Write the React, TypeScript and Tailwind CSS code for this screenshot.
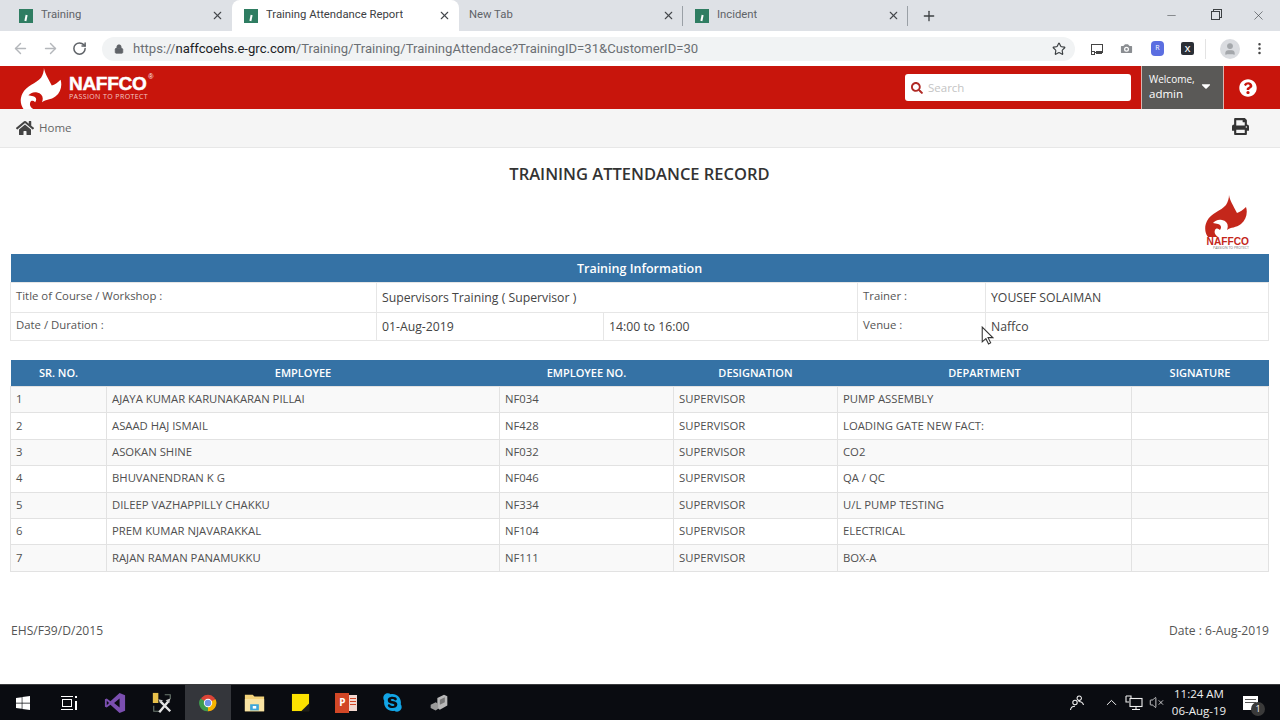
import React from "react";
import { ArrowLeft, ArrowRight, RotateCw, Lock, Star, X, Plus, Minus, Camera, MoreVertical, User, ChevronUp, VolumeX } from "lucide-react";
import { FaHome, FaPrint, FaQuestionCircle, FaSearch, FaWindows, FaSkype, FaCaretDown } from "react-icons/fa";

const Favicon = () => (
  <span className="flex h-[14px] w-[14px] shrink-0 items-end justify-center bg-[#2f7d62] pb-[2px]">
    <span className="h-[6px] w-[2px] rotate-12 bg-white" />
  </span>
);

const Tab = ({ title, active, icon = true, sep, w }: { title: string; active?: boolean; icon?: boolean; sep?: boolean; w: string }) => (
  <div className={`relative flex h-full items-center ${w} ${active ? "rounded-t-lg bg-white pl-3" : "pl-3"}`}>
    {icon && <Favicon />}
    <span className={`truncate font-['Roboto',sans-serif] text-[11.300px] ${icon ? "ml-2" : "-ml-[2px]"} ${active ? "text-[#3c4043]" : "text-[#5f6368]"}`}>{title}</span>
    <X size={13} strokeWidth={2} className="ml-auto mr-[8px] shrink-0 text-[#45484c]" />
    {sep && <span className="absolute right-0 top-[6px] h-[20px] w-px bg-[#9aa0a6]" />}
  </div>
);

const FlameLogo = ({ className, fill }: { className: string; fill: string }) => (
  <svg viewBox="0 0 44 42" className={className} fill={fill}>
    <path d="M24 0C25 6 28 10 32 18C35 17 38 15 41 12C43 18 41 25 36 29C31 33 26 32 22 35C24 30 22 26 17 25C13 24 10 26 8 28L13 29C16 30 17 32 15 35C13 33 11 33 10 35C9 38 10 40 13 42L3 42C0 38 -1 32 2 26C6 18 16 16 21 10C23 7 24 3 24 0Z" />
  </svg>
);

const ChromeIcon = () => (
  <svg viewBox="0 0 24 24" className="h-[18px] w-[18px]">
    <circle cx="12" cy="12" r="11" fill="#db4437" />
    <path d="M12 12 22 7a11 11 0 0 1-10 16z" fill="#f4b400" />
    <path d="M12 12 12 23A11 11 0 0 1 2 6z" fill="#3f9b4f" />
    <circle cx="12" cy="12" r="5.6" fill="#fff" />
    <circle cx="12" cy="12" r="4.3" fill="#6f94e8" />
  </svg>
);

const VsIcon = () => (
  <svg viewBox="0 0 24 24" className="h-[22px] w-[22px]" fill="#7b4fb0">
    <path d="M17 1l6 2.500v17L17 23 7 14l-4 3-2-1V8l2-1 4 3zM3 9.500v5l2.500-2.500zM17 7l-6 5 6 5z" />
  </svg>
);

const ToolsIcon = () => (
  <svg viewBox="0 0 24 24" className="h-[22px] w-[22px]">
    <rect x="2" y="1" width="6" height="11" fill="#e8c04a" />
    <path d="M15 3h6v5M3 15v6h6" fill="none" stroke="#6c7a70" strokeWidth="1.2" />
    <path d="M9 22 19 10M21 21 10 10" stroke="#e4e4e4" strokeWidth="2.600" />
    <path d="M8 8l5 1-3 3zM16 9l5-2-1 5z" fill="#c9c9c9" />
  </svg>
);

const FolderIcon = () => (
  <svg viewBox="0 0 24 24" className="h-[21px] w-[21px]">
    <path d="M1 3h9l2 2h11v17H1z" fill="#f2d27a" />
    <rect x="1" y="8" width="22" height="14" fill="#f8e3a3" />
    <rect x="7" y="14" width="10" height="7" fill="#3ea6d8" />
    <rect x="10" y="16" width="4" height="3" fill="#fff" />
  </svg>
);

const StickyIcon = () => (
  <svg viewBox="0 0 20 20" className="h-[19px] w-[19px]">
    <rect width="18" height="18" x="1" y="1" fill="#fce100" />
    <path d="M19 11v8h-8z" fill="#1c1c1c" />
  </svg>
);

const PptIcon = () => (
  <span className="relative flex h-[20px] w-[22px] items-center">
    <span className="absolute right-0 top-[2px] flex h-[16px] w-[13px] flex-col items-end gap-[2px] bg-[#f3d8d0] pr-[1px] pt-[3px]">
      <span className="h-px w-[6px] bg-[#d24726]" />
      <span className="h-px w-[6px] bg-[#d24726]" />
      <span className="h-px w-[6px] bg-[#d24726]" />
    </span>
    <span className="relative flex h-[20px] w-[14px] items-center justify-center bg-[#d24726] text-[10px] font-bold text-white">P</span>
  </span>
);

const DriveIcon = () => (
  <svg viewBox="0 0 24 24" className="h-[20px] w-[20px]">
    <path d="M10 6l8-4 4 2v11l-9 5-3-2z" fill="#b8b8b8" />
    <path d="M13 8l6-3v6l-6 3z" fill="#777" />
    <path d="M2 14l6-3 3 2v6l-3 2-6-3z" fill="#9a9a9a" />
  </svg>
);

const PeopleIcon = () => (
  <svg viewBox="0 0 16 16" className="h-[16px] w-[16px]" fill="none" stroke="#f0f0f0" strokeWidth="1.100">
    <circle cx="6" cy="7.500" r="2.200" />
    <path d="M1.500 15c.3-2.500 2-3.800 4.500-3.800M9 5a2.200 2.200 0 1 0 1-4 2.200 2.200 0 0 0-1 4zM9.500 6.500c2.500 0 4.500 1.300 5 3.500" />
  </svg>
);

const NetworkIcon = () => (
  <svg viewBox="0 0 18 16" className="h-[16px] w-[18px]" fill="none" stroke="#f0f0f0" strokeWidth="1.100">
    <path d="M1 1h5v3M1 1v6h3" />
    <rect x="5" y="3.500" width="12" height="8" />
    <path d="M11 11.500v3M7 14.500h8" />
  </svg>
);

const TaskCell = ({ children, active }: { children: React.ReactNode; active?: boolean }) => (
  <div className={`flex h-full w-[46.200px] items-center justify-center ${active ? "bg-[#34363b]" : ""}`}>{children}</div>
);

const rows = [
  ["1", "AJAYA KUMAR KARUNAKARAN PILLAI", "NF034", "SUPERVISOR", "PUMP ASSEMBLY"],
  ["2", "ASAAD HAJ ISMAIL", "NF428", "SUPERVISOR", "LOADING GATE NEW FACT:"],
  ["3", "ASOKAN SHINE", "NF032", "SUPERVISOR", "CO2"],
  ["4", "BHUVANENDRAN K G", "NF046", "SUPERVISOR", "QA / QC"],
  ["5", "DILEEP VAZHAPPILLY CHAKKU", "NF334", "SUPERVISOR", "U/L PUMP TESTING"],
  ["6", "PREM KUMAR NJAVARAKKAL", "NF104", "SUPERVISOR", "ELECTRICAL"],
  ["7", "RAJAN RAMAN PANAMUKKU", "NF111", "SUPERVISOR", "BOX-A"],
];

const headers = ["SR. NO.", "EMPLOYEE", "EMPLOYEE NO.", "DESIGNATION", "DEPARTMENT", "SIGNATURE"];
const colWidths = ["w-[96px]", "w-[393px]", "w-[174px]", "w-[164px]", "w-[294px]", "w-[137px]"];

const labelCell = "border border-[#e6e6e6] px-[5px] pb-[2px] align-middle text-[11.350px] text-[#555]";
const valueCell = "border border-[#e6e6e6] px-[5px] pt-[3px] align-middle text-[12.250px] text-[#444]";

export default function App() {
  return (
    <div className="flex h-screen w-full flex-col overflow-hidden bg-white font-['Open_Sans',sans-serif]">
      {/* browser tabs */}
      <div className="flex h-[31px] shrink-0 items-center bg-[#dee1e6] pl-[7px]">
        <Tab title="Training" w="w-[225px]" />
        <Tab title="Training Attendance Report" active w="w-[227px]" />
        <Tab title="New Tab" icon={false} sep w="w-[224px]" />
        <Tab title="Incident" sep w="w-[225px]" />
        <Plus size={16} strokeWidth={2} className="ml-[13px] text-[#3c4043]" />
        <div className="ml-auto flex items-center gap-[31px] pr-[14px] text-[#3c4043]">
          <Minus size={13} strokeWidth={1} className="mr-[2px]" />
          <span className="relative h-[9px] w-[9px] border border-[#3c4043] bg-[#dee1e6] shadow-[2px_-2px_0_-1px_#dee1e6,2px_-2px_0_0_#3c4043]" />
          <X size={15} strokeWidth={1} />
        </div>
      </div>

      {/* browser toolbar */}
      <div className="flex h-[35px] shrink-0 items-center bg-white">
        <div className="flex w-[102px] items-center gap-[13px] pl-[12px]">
          <ArrowLeft size={17} className="text-[#b4b7bb]" />
          <ArrowRight size={17} className="text-[#b4b7bb]" />
          <RotateCw size={15} strokeWidth={2.400} className="text-[#5f6368]" />
        </div>
        <div className="flex h-[24px] w-[973px] items-center rounded-full bg-[#f1f3f4] pl-[12px] pr-[9px]">
          <Lock size={10} fill="#5f6368" className="mr-[9px] text-[#5f6368]" />
          <span className="font-['Roboto',sans-serif] text-[13.100px] text-[#6b6f73]">
            https://<span className="text-[#202124]">naffcoehs.e-grc.com</span>/Training/Training/TrainingAttendace?TrainingID=31&amp;CustomerID=30
          </span>
          <Star size={14} className="ml-auto text-[#3c4043]" />
        </div>
        <div className="flex flex-1 items-center pl-[16px] text-[#5f6368]">
          <span className="relative h-[9px] w-[12px] border border-[#444]">
            <span className="absolute -bottom-[3px] -left-[1px] h-[4px] w-[4px] border border-[#444] bg-white" />
            <span className="absolute -bottom-[2px] right-0 h-[3px] w-[6px] bg-[#444]" />
          </span>
          <Camera size={15} fill="#8a8d91" className="ml-[16px] text-white" />
          <span className="ml-[17px] flex h-[15px] w-[13px] items-center justify-center rounded-[4px] bg-[#5b6ee1] text-[7px] text-white">R</span>
          <span className="ml-[17px] flex h-[13px] w-[13px] items-center justify-center rounded-[2px] bg-[#2b2f36] text-[9px] font-semibold text-white">X</span>
          <span className="ml-[11px] h-[20px] w-px bg-[#e3e3e3]" />
          <span className="ml-[14px] flex h-[20px] w-[20px] items-center justify-center rounded-full bg-[#dadce0]">
            <User size={14} fill="#a4a7ab" className="text-[#a4a7ab]" />
          </span>
          <MoreVertical size={15} className="ml-[12px] text-[#444]" />
        </div>
      </div>

      {/* app header */}
      <header className="flex h-[43px] shrink-0 items-center bg-[#c8150c] pl-[20px]">
        <FlameLogo className="mt-[2px] h-[41px] w-[44px]" fill="#fff" />
        <div className="ml-[5px] flex flex-col leading-none text-white">
          <span className="relative font-['Liberation_Sans',sans-serif] text-[19px] font-bold leading-[17px] tracking-[-0.300px] [-webkit-text-stroke:0.5px_white]">
            NAFFCO
            <sup className="absolute -right-[5px] top-[2px] text-[7px] font-normal [-webkit-text-stroke:0]">®</sup>
          </span>
          <span className="mt-[1px] text-[7px] tracking-[0.400px] text-[#f2c9c6]">PASSION TO PROTECT</span>
        </div>
        <div className="ml-auto flex h-full items-center">
          <div className="flex h-[27px] w-[226px] items-center rounded-[3px] bg-white pl-[6px]">
            <FaSearch size={12} className="text-[#b02a25]" />
            <span className="ml-[5px] text-[11.500px] text-[#c4c4c4]">Search</span>
          </div>
          <div className="ml-[10px] flex h-full w-[83px] items-center border-x border-[#d9b5b0] bg-[#5a5957] pb-[3px] pl-[7px] text-white">
            <div className="flex flex-col">
              <span className="text-[10px] leading-[15px]">Welcome,</span>
              <span className="text-[11.500px] leading-[14px]">admin</span>
            </div>
            <FaCaretDown size={14} className="ml-auto mr-[10px]" />
          </div>
          <div className="mr-[9px] flex w-[47px] justify-center">
            <FaQuestionCircle size={18} className="text-white" />
          </div>
        </div>
      </header>

      {/* breadcrumb */}
      <div className="flex h-[39px] shrink-0 items-center border-b border-[#e7e7e7] bg-[#f5f5f5] pl-[16px] pr-[31px]">
        <FaHome size={18} className="text-[#444]" />
        <span className="ml-[5px] text-[11.500px] text-[#666]">Home</span>
        <FaPrint size={17} className="mb-[4px] ml-auto text-[#333]" />
      </div>

      {/* report */}
      <main className="flex flex-1 flex-col pl-[10px] pr-[11px]">
        <h1 className="mt-[14px] text-center text-[16.500px] font-semibold leading-[24px] text-[#333]">TRAINING ATTENDANCE RECORD</h1>
        <div className="mt-[9px] flex h-[59px] flex-col items-end pr-[20px]">
          <FlameLogo className="h-[42px] w-[44px] shrink-0" fill="#c4271b" />
          <span className="font-['Liberation_Sans',sans-serif] text-[10.200px] font-bold leading-[9px] text-[#c4271b]">NAFFCO</span>
          <span className="text-[3.500px] leading-[4px] text-[#777]">PASSION TO PROTECT</span>
        </div>

        <table className="w-[1258px] table-fixed border-collapse">
          <colgroup>
            <col className="w-[366px]" />
            <col className="w-[227px]" />
            <col className="w-[254px]" />
            <col className="w-[128px]" />
            <col className="w-[283px]" />
          </colgroup>
          <thead>
            <tr className="h-[28px] bg-[#3572a5]">
              <th colSpan={5} className="pt-[3px] text-center text-[12.500px] font-semibold text-white">Training Information</th>
            </tr>
          </thead>
          <tbody>
            <tr className="h-[30px]">
              <td className={labelCell}>Title of Course / Workshop :</td>
              <td colSpan={2} className={valueCell}>Supervisors Training ( Supervisor )</td>
              <td className={labelCell}>Trainer :</td>
              <td className={valueCell}>YOUSEF SOLAIMAN</td>
            </tr>
            <tr className="h-[28px]">
              <td className={labelCell}>Date / Duration :</td>
              <td className={valueCell}>01-Aug-2019</td>
              <td className={valueCell}>14:00 to 16:00</td>
              <td className={labelCell}>Venue :</td>
              <td className={valueCell}>Naffco</td>
            </tr>
          </tbody>
        </table>

        <table className="mt-[19px] w-[1258px] table-fixed border-collapse">
          <colgroup>
            {colWidths.map((w) => (
              <col key={w} className={w} />
            ))}
          </colgroup>
          <thead>
            <tr className="h-[27px] bg-[#3572a5]">
              {headers.map((h) => (
                <th key={h} className="text-center text-[11px] font-semibold text-white">{h}</th>
              ))}
            </tr>
          </thead>
          <tbody>
            {rows.map((r, i) => (
              <tr key={r[0]} className={`h-[26.400px] ${i % 2 === 0 ? "bg-[#f9f9f9]" : "bg-white"}`}>
                {r.map((c, j) => (
                  <td key={j} className="border border-[#e2e2e2] px-[5px] text-[11.300px] text-[#505050]">{c}</td>
                ))}
                <td className="border border-[#e2e2e2]" />
              </tr>
            ))}
          </tbody>
        </table>

        <div className="mt-[50px] flex justify-between pl-[1px] text-[12.100px] text-[#555]">
          <span>EHS/F39/D/2015</span>
          <span>Date : 6-Aug-2019</span>
        </div>
      </main>

      {/* windows taskbar */}
      <footer className="flex h-[36px] shrink-0 items-center border-t border-[#3a3b3d] bg-[#0a0c11] text-white">
        <TaskCell><FaWindows size={16} /></TaskCell>
        <TaskCell>
          <span className="relative flex h-[14px] w-[16px] flex-col justify-between">
            <span className="h-px w-[12px] bg-white" />
            <span className="ml-[1px] h-[8px] w-[10px] border border-white" />
            <span className="h-px w-[12px] bg-white" />
            <span className="absolute right-0 top-0 h-[2px] w-[2px] bg-white" />
            <span className="absolute right-0 top-[5px] h-[9px] w-[2px] bg-white" />
          </span>
        </TaskCell>
        <TaskCell><VsIcon /></TaskCell>
        <TaskCell><ToolsIcon /></TaskCell>
        <TaskCell active><ChromeIcon /></TaskCell>
        <TaskCell><FolderIcon /></TaskCell>
        <TaskCell><StickyIcon /></TaskCell>
        <TaskCell><PptIcon /></TaskCell>
        <TaskCell><FaSkype size={21} className="text-[#12a5e6]" /></TaskCell>
        <TaskCell><DriveIcon /></TaskCell>
        <div className="ml-auto flex h-full items-center text-[#f0f0f0]">
          <PeopleIcon />
          <ChevronUp size={17} strokeWidth={1.400} className="ml-[18px]" />
          <span className="ml-[5px]"><NetworkIcon /></span>
          <VolumeX size={15} strokeWidth={1.300} className="ml-[6px]" />
          <div className="ml-[5px] flex w-[60px] flex-col items-center pb-[1px] text-[11.500px] leading-[17px]">
            <span>11:24 AM</span>
            <span>06-Aug-19</span>
          </div>
          <div className="relative ml-[14px] mr-[22px] flex h-[14px] w-[15px] flex-col gap-[2px] bg-white px-[2px] pt-[3px]">
            <span className="h-px w-full bg-[#555]" />
            <span className="h-px w-full bg-[#555]" />
            <span className="absolute -bottom-[6px] -right-[7px] flex h-[14px] w-[14px] items-center justify-center rounded-full bg-[#3a3a3a] text-[9px] text-white">1</span>
          </div>
        </div>
      </footer>

      {/* mouse pointer */}
      <svg viewBox="0 0 12 18" className="absolute left-[981px] top-[326px] h-[19px] w-[13px]">
        <path d="M1 1v14l3.500-3 2.500 5 2-1-2.500-5H11z" fill="#fff" stroke="#333" strokeWidth="1" />
      </svg>
    </div>
  );
}
